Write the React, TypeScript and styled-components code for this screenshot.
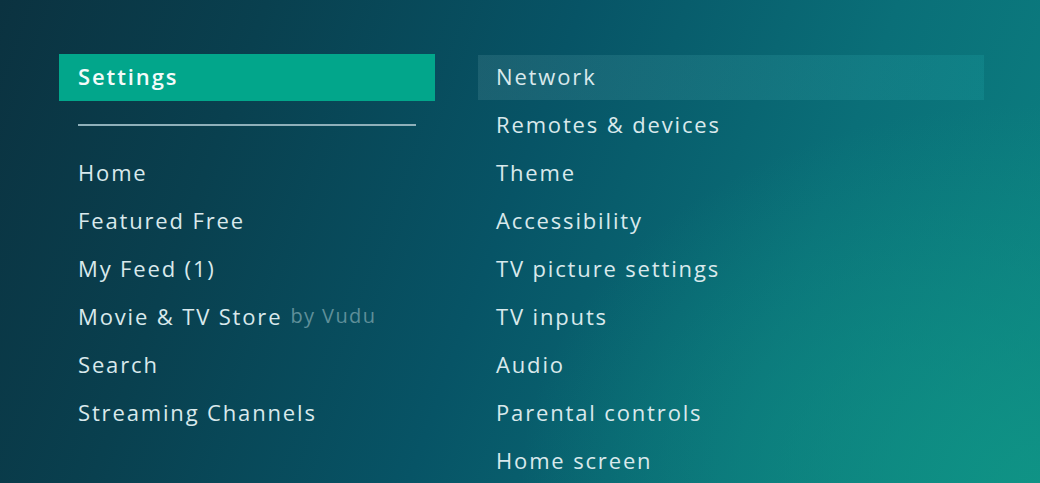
import React from "react";
import styled, { createGlobalStyle } from "styled-components";

const Global = createGlobalStyle`
  html, body { margin: 0; padding: 0; }
  body { width: 1040px; height: 483px; overflow: hidden; }
`;

const Screen = styled.div`
  width: 1040px;
  height: 483px;
  box-sizing: border-box;
  padding: 54px 0 0 59px;
  display: flex;
  gap: 43px;
  align-items: flex-start;
  font-family: "Open Sans", "Liberation Sans", sans-serif;
  background:
    radial-gradient(ellipse 520px 380px at 1040px 483px, rgba(16, 150, 134, 0.85), rgba(16, 150, 134, 0) 100%),
    linear-gradient(110deg, #0b3240 0%, #09404f 22%, #075466 48%, #0a6f78 74%, #0c8282 100%);
  overflow: hidden;
`;

const LeftColumn = styled.div`
  width: 376px;
  display: flex;
  flex-direction: column;
`;

const RightColumn = styled.div`
  width: 506px;
  display: flex;
  flex-direction: column;
  margin-top: -2px;
`;

const SelectedHeader = styled.div`
  height: 47px;
  background: #02a68b;
  display: flex;
  align-items: center;
  padding-left: 19px;
  padding-bottom: 3px;
  box-sizing: border-box;
  color: #f4fbfa;
  font-size: 22px;
  font-weight: 600;
  letter-spacing: 1.9px;
`;

const Divider = styled.div`
  margin: 23px 19px 22px 19px;
  height: 2px;
  background: #8fb0ba;
`;

const Item = styled.div<{ $focused?: boolean; $indent: number }>`
  height: 48px;
  box-sizing: border-box;
  display: flex;
  align-items: center;
  padding-left: ${(p) => p.$indent}px;
  padding-bottom: 4px;
  color: #d9e9ec;
  font-size: 22px;
  letter-spacing: 1.85px;
  white-space: nowrap;
  border-top: 3px solid transparent;
  background-clip: padding-box;
  ${(p) =>
    p.$focused
      ? `background-image: linear-gradient(90deg, rgba(170,220,225,0.12), rgba(40,190,190,0.16));`
      : ""}
`;

const Muted = styled.span`
  color: #5f8f99;
  margin-left: 8px;
  font-size: 20px;
  letter-spacing: 1.4px;
`;

const leftItems: { label: string; extra?: string }[] = [
  { label: "Home" },
  { label: "Featured Free" },
  { label: "My Feed (1)" },
  { label: "Movie & TV Store", extra: "by Vudu" },
  { label: "Search" },
  { label: "Streaming Channels" },
];

const rightItems = [
  "Network",
  "Remotes & devices",
  "Theme",
  "Accessibility",
  "TV picture settings",
  "TV inputs",
  "Audio",
  "Parental controls",
  "Home screen",
];

export default function App() {
  return (
    <>
      <Global />
      <Screen>
        <LeftColumn>
          <SelectedHeader>Settings</SelectedHeader>
          <Divider />
          {leftItems.map((it) => (
            <Item key={it.label} $indent={19}>
              {it.label}
              {it.extra && <Muted>{it.extra}</Muted>}
            </Item>
          ))}
        </LeftColumn>
        <RightColumn>
          {rightItems.map((label, i) => (
            <Item key={label} $indent={18} $focused={i === 0}>
              {label}
            </Item>
          ))}
        </RightColumn>
      </Screen>
    </>
  );
}
